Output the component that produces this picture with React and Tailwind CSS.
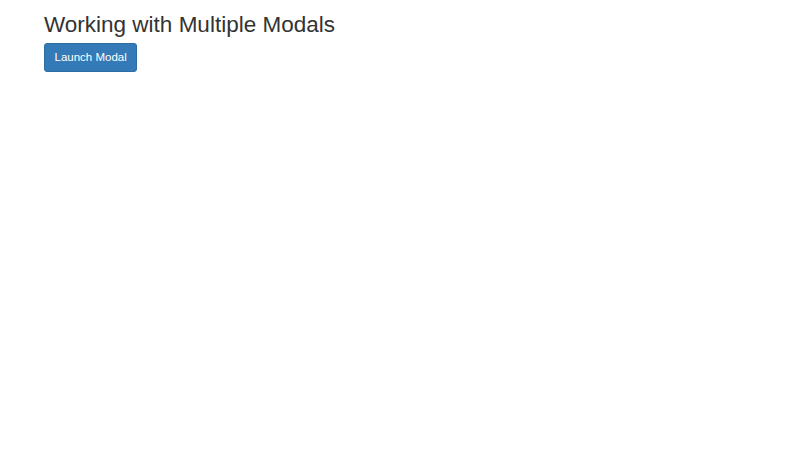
export default function App() {
  return (
    <div className="min-h-[450px] bg-white px-[44px] pt-[12px] font-['Liberation_Sans',Arial,sans-serif] text-[#333]">
      <h3 className="text-[22.5px] leading-[25px] font-normal">
        Working with Multiple Modals
      </h3>
      <button className="mt-[6px] h-[29px] rounded-[3px] border border-[#2e6da4] bg-[#337ab7] px-[9.5px] text-[11.5px] text-white">
        Launch Modal
      </button>
    </div>
  );
}
